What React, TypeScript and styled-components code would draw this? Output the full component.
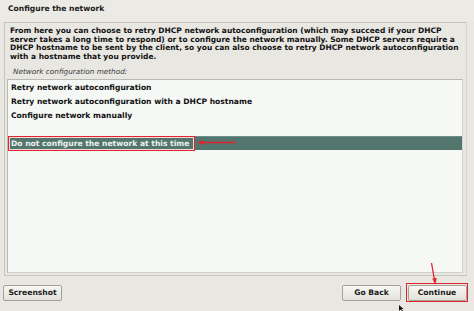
import React from "react";
import styled, { createGlobalStyle } from "styled-components";

const GlobalStyle = createGlobalStyle`
  html, body {
    margin: 0;
    padding: 0;
    background: #e8e7e2;
  }
  body {
    font-family: "DejaVu Sans", "Liberation Sans", sans-serif;
  }
`;

const Window = styled.div`
  position: relative;
  width: 474px;
  height: 311px;
  background: #e8e7e2;
  display: flex;
  flex-direction: column;
  overflow: hidden;
  color: #1a1a1a;
`;

const Header = styled.div`
  height: 22px;
  box-sizing: border-box;
  padding: 4px 0 0 8px;
  font-size: 7.6px;
  font-weight: bold;
  line-height: 9px;
  background: #ebeae5;
`;

const Panel = styled.div`
  margin: 0 7px 0 4px;
  height: 254px;
  box-sizing: border-box;
  border: 1px solid #c6c4be;
  border-right-color: #d6d4ce;
  padding: 4px 3px 2px 1px;
  display: flex;
  flex-direction: column;
`;

const Intro = styled.p`
  margin: 0 0 0 4px;
  font-size: 7.5px;
  font-weight: bold;
  line-height: 8.6px;
  color: #111;
  white-space: nowrap;
`;

const Label = styled.div`
  margin: 6px 0 3px 7px;
  font-size: 7.3px;
  font-style: italic;
  line-height: 9px;
  color: #3a3a3a;
`;

const List = styled.div`
  flex: 1;
  margin-left: 1px;
  background: #f5f8f5;
  border: 1px solid #b9b7b1;
  border-right-color: #d2d0ca;
  border-bottom-color: #d2d0ca;
  display: flex;
  flex-direction: column;
`;

const Row = styled.div<{ $selected?: boolean }>`
  height: 14px;
  display: flex;
  align-items: center;
  padding-left: 3px;
  font-size: 7.6px;
  font-weight: bold;
  color: ${(p) => (p.$selected ? "#eef2ef" : "#111")};
  background: ${(p) => (p.$selected ? "#52766d" : "transparent")};
  border-top: ${(p) => (p.$selected ? "1px solid #6f8e86" : "none")};
  box-sizing: border-box;
`;

const Marked = styled.span`
  margin-left: -3px;
  padding: 2px 5px 2px 2px;
  border: 1.5px solid #e3232e;
  box-shadow: inset 0 0 0 1px #f4d9da;
`;

const Footer = styled.div`
  flex: 1;
  display: flex;
  align-items: center;
  padding: 0 6px 2px 3px;
  gap: 3px;
`;

const Spacer = styled.div`
  flex: 1;
`;

const Button = styled.button`
  width: 59px;
  height: 16px;
  padding: 0;
  border: 1px solid #a3a19b;
  border-radius: 2px;
  background: linear-gradient(#f7f6f3, #e3e1db);
  font-family: "DejaVu Sans", "Liberation Sans", sans-serif;
  font-size: 7.6px;
  font-weight: bold;
  color: #1a1a1a;
`;

const Highlight = styled.div`
  border: 1.5px solid #e3232e;
  padding: 0.5px;
  margin-left: 2px;
  display: flex;
`;

const Marks = styled.svg`
  position: absolute;
  left: 0;
  top: 0;
  pointer-events: none;
`;

const introLines = [
  "From here you can choose to retry DHCP network autoconfiguration (which may succeed if your DHCP",
  "server takes a long time to respond) or to configure the network manually. Some DHCP servers require a",
  "DHCP hostname to be sent by the client, so you can also choose to retry DHCP network autoconfiguration",
  "with a hostname that you provide.",
];

const items = [
  "Retry network autoconfiguration",
  "Retry network autoconfiguration with a DHCP hostname",
  "Configure network manually",
  "",
];

export default function App() {
  return (
    <Window>
      <GlobalStyle />
      <Header>Configure the network</Header>
      <Panel>
        <Intro>
          {introLines.map((l, i) => (
            <React.Fragment key={i}>
              {l}
              {i < introLines.length - 1 && <br />}
            </React.Fragment>
          ))}
        </Intro>
        <Label>Network configuration method:</Label>
        <List>
          {items.map((t, i) => (
            <Row key={i}>{t}</Row>
          ))}
          <Row $selected>
            <Marked>Do not configure the network at this time</Marked>
          </Row>
        </List>
      </Panel>
      <Footer>
        <Button>Screenshot</Button>
        <Spacer />
        <Button>Go Back</Button>
        <Highlight>
          <Button>Continue</Button>
        </Highlight>
      </Footer>
      <Marks width="474" height="311" viewBox="0 0 474 311">
        <line x1="236" y1="142.5" x2="202" y2="142.5" stroke="#e3232e" strokeWidth="1.3" />
        <polygon points="197,142.5 204,140.3 204,144.7" fill="#e3232e" />
        <line x1="431.5" y1="263" x2="434.5" y2="280" stroke="#e3232e" strokeWidth="1.3" />
        <polygon points="435.3,285 432.3,278.5 436.8,278" fill="#e3232e" />
        <polygon points="399,305 399,311 400.5,309.5 402,311 403,311 401.5,309 403.5,309" fill="#111" />
      </Marks>
    </Window>
  );
}
